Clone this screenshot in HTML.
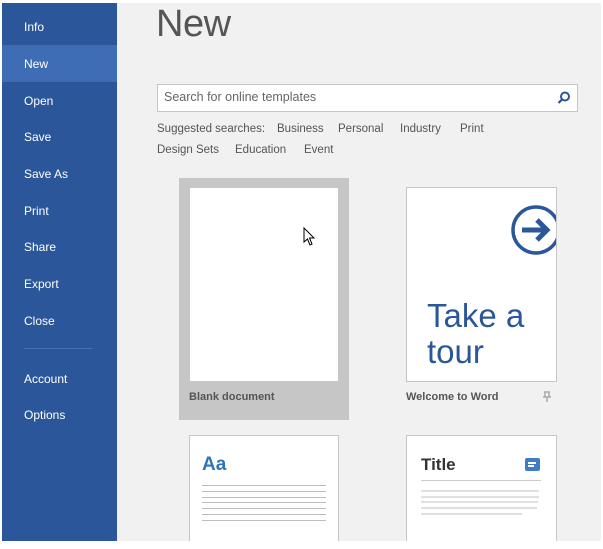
<!DOCTYPE html>
<html><head><meta charset="utf-8"><style>
*{margin:0;padding:0;box-sizing:border-box}
body{width:603px;height:549px;background:#fff;position:relative;overflow:hidden;font-family:"Liberation Sans",sans-serif}
.main{position:absolute;left:2px;top:3px;width:599px;height:538px;background:#f1f1f1;overflow:hidden}
.side{position:absolute;left:2px;top:3px;width:115px;height:538px;background:#2b579a}
.nav{position:absolute;left:24px;color:#fff;font-size:12px}
.hl{position:absolute;left:2px;top:45px;width:115px;height:37px;background:#3e6db5}
.abs{position:absolute}
.sug{position:absolute;font-size:11.5px;color:#555}
.page{position:absolute;background:#fff;border:1px solid #c6c6c6}
.ln{position:absolute;height:1px;background:#bdbdbd}
.gl{position:absolute;height:2px;background:#e0e0e0}
</style></head><body>
<div class="main">
<div class="page" style="left:187px;top:432px;width:150px;height:120px"></div>
<div class="abs" style="left:200px;top:451px;font-size:19px;font-weight:bold;color:#2e75b6">Aa</div>
<div class="ln" style="left:200px;top:482px;width:124px"></div>
<div class="ln" style="left:200px;top:488px;width:124px"></div>
<div class="ln" style="left:200px;top:494px;width:124px"></div>
<div class="ln" style="left:200px;top:499px;width:124px"></div>
<div class="ln" style="left:200px;top:505px;width:124px"></div>
<div class="ln" style="left:200px;top:511px;width:124px"></div>
<div class="ln" style="left:200px;top:517px;width:124px"></div>
<div class="page" style="left:404px;top:432px;width:151px;height:120px"></div>
<div class="abs" style="left:419px;top:452px;font-size:17px;font-weight:bold;color:#333">Title</div>
<div class="abs" style="left:523px;top:455px;width:15px;height:13px;background:#3f7cc4;border-radius:2px"><div class="abs" style="left:3px;top:4px;width:8px;height:1.5px;background:#fff"></div><div class="abs" style="left:3px;top:7px;width:6px;height:1.5px;background:#fff"></div></div>
<div class="ln" style="left:419px;top:477px;width:120px;background:#ccc"></div>
<div class="gl" style="left:419px;top:487px;width:118px"></div>
<div class="gl" style="left:419px;top:493px;width:118px"></div>
<div class="gl" style="left:419px;top:498px;width:117px"></div>
<div class="gl" style="left:419px;top:504px;width:116px"></div>
<div class="gl" style="left:419px;top:510px;width:101px"></div>
</div>
<div class="side"></div>
<div class="hl"></div>
<div class="nav" style="top:20px">Info</div>
<div class="nav" style="top:57px">New</div>
<div class="nav" style="top:94px">Open</div>
<div class="nav" style="top:130px">Save</div>
<div class="nav" style="top:167px">Save As</div>
<div class="nav" style="top:204px">Print</div>
<div class="nav" style="top:240px">Share</div>
<div class="nav" style="top:277px">Export</div>
<div class="nav" style="top:314px">Close</div>
<div class="abs" style="left:24px;top:348px;width:68px;height:1px;background:#4a72b0"></div>
<div class="nav" style="top:372px">Account</div>
<div class="nav" style="top:408px">Options</div>

<div class="abs" style="left:156px;top:3px;font-size:38px;color:#555;letter-spacing:-0.5px">New</div>
<div class="abs" style="left:157px;top:84px;width:421px;height:28px;background:#fff;border:1px solid #c6c6c6"></div>
<div class="abs" style="left:164px;top:90px;font-size:12.5px;color:#666">Search for online templates</div>
<svg class="abs" style="left:556px;top:90px" width="16" height="16" viewBox="0 0 16 16"><circle cx="9" cy="6.5" r="4" fill="none" stroke="#2b579a" stroke-width="2"/><line x1="6" y1="9.5" x2="2.5" y2="13" stroke="#2b579a" stroke-width="2.2"/></svg>
<div class="sug" style="left:157px;top:123px">Suggested searches:</div>
<div class="sug" style="left:277px;top:123px">Business</div>
<div class="sug" style="left:338px;top:123px">Personal</div>
<div class="sug" style="left:400px;top:123px">Industry</div>
<div class="sug" style="left:460px;top:123px">Print</div>
<div class="sug" style="left:157px;top:144px">Design Sets</div>
<div class="sug" style="left:235px;top:144px">Education</div>
<div class="sug" style="left:304px;top:144px">Event</div>

<div class="abs" style="left:179px;top:178px;width:170px;height:242px;background:#c6c6c6"></div>
<div class="page" style="left:189px;top:187px;width:150px;height:195px"></div>
<div class="abs" style="left:189px;top:391px;font-size:11px;color:#555;font-weight:bold">Blank document</div>
<svg class="abs" style="left:303px;top:227px" width="14" height="20" viewBox="0 0 14 20"><path d="M1 1 L1 15 L4.5 12 L7 18 L9 17 L6.5 11 L11 11 Z" fill="#fff" stroke="#000" stroke-width="1"/></svg>

<div class="page" style="left:406px;top:187px;width:151px;height:195px;overflow:hidden">
<svg class="abs" style="left:103px;top:16px" width="52" height="52" viewBox="0 0 52 52"><circle cx="26" cy="26" r="23" fill="none" stroke="#2b579a" stroke-width="3.5"/><path d="M12 26 H36 M27 16 L37 26 L27 36" fill="none" stroke="#2b579a" stroke-width="5"/></svg>
<div class="abs" style="left:20px;top:110px;font-size:33px;line-height:36px;color:#2b579a">Take a<br>tour</div>
</div>
<div class="abs" style="left:406px;top:391px;font-size:11px;color:#555;font-weight:bold">Welcome to Word</div>
<svg class="abs" style="left:542px;top:391px" width="10" height="12" viewBox="0 0 10 12"><path d="M2 1 H8 M3 1 V6 H7 V1 M1 6 H9 M5 6 V11" stroke="#aaa" stroke-width="1.5" fill="none"/></svg>
</body></html>
